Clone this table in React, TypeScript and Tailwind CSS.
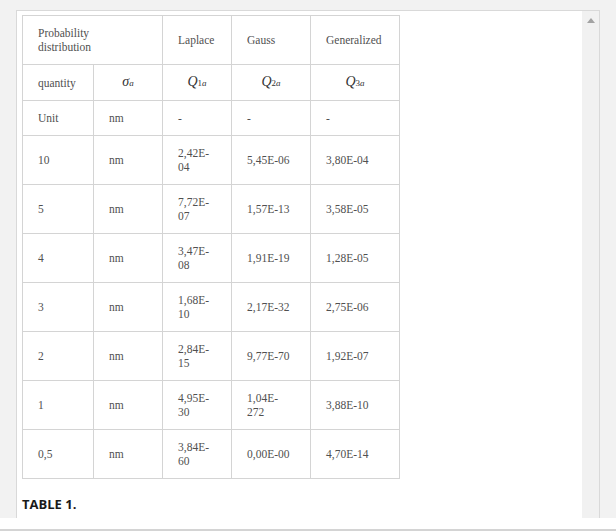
import React from "react";

const rows: [string, string, string, string, string][] = [
  ["10", "nm", "2,42E-04", "5,45E-06", "3,80E-04"],
  ["5", "nm", "7,72E-07", "1,57E-13", "3,58E-05"],
  ["4", "nm", "3,47E-08", "1,91E-19", "1,28E-05"],
  ["3", "nm", "1,68E-10", "2,17E-32", "2,75E-06"],
  ["2", "nm", "2,84E-15", "9,77E-70", "1,92E-07"],
  ["1", "nm", "4,95E-30", "1,04E-272", "3,88E-10"],
  ["0,5", "nm", "3,84E-60", "0,00E-00", "4,70E-14"],
];

const td = "border border-[#d4d4d4] px-[15px] py-[10px] align-middle";

function Q({ n }: { n: string }) {
  return (
    <span className="italic text-[14px] text-[#333]" style={{ fontFamily: '"Liberation Serif", serif' }}>
      Q<span className="text-[9px] not-italic">{n}</span><span className="text-[9px]">a</span>
    </span>
  );
}

export default function App() {
  return (
    <div className="w-[616px] h-[531px] bg-[#f2f2f2] flex flex-col overflow-hidden">
      <div className="flex h-[518px] pt-[10px]">
        <div className="w-[16px] shrink-0" />
        <div className="w-[584px] shrink-0 flex border border-[#d9d9d9] bg-white border-b-0">
          <div className="flex-1 pl-[5px] pt-[4px] flex flex-col">
            <table
              className="border-collapse table-fixed w-[377px] text-[11.5px] leading-[14px] text-[#505050]"
              style={{ fontFamily: '"Liberation Serif", "Times New Roman", serif' }}
            >
              <colgroup>
                <col className="w-[71px]" />
                <col className="w-[69px]" />
                <col className="w-[69px]" />
                <col className="w-[79px]" />
                <col className="w-[89px]" />
              </colgroup>
              <tbody>
                <tr className="h-[49px]">
                  <td className={td} colSpan={2}>Probability<br />distribution</td>
                  <td className={td}>Laplace</td>
                  <td className={td}>Gauss</td>
                  <td className={td}>Generalized</td>
                </tr>
                <tr className="h-[36px]">
                  <td className={td}>quantity</td>
                  <td className={td + " text-center"}>
                    <span className="italic text-[14px] text-[#333]">σ</span>
                    <span className="italic text-[9px] text-[#333]">a</span>
                  </td>
                  <td className={td + " text-center"}><Q n="1" /></td>
                  <td className={td + " text-center"}><Q n="2" /></td>
                  <td className={td + " text-center"}><Q n="3" /></td>
                </tr>
                <tr className="h-[35px]">
                  <td className={td}>Unit</td>
                  <td className={td}>nm</td>
                  <td className={td}>-</td>
                  <td className={td}>-</td>
                  <td className={td}>-</td>
                </tr>
                {rows.map((r) => (
                  <tr key={r[0]} className="h-[49px]">
                    {r.map((c, i) => (
                      <td key={i} className={td + " break-words"}>{c}</td>
                    ))}
                  </tr>
                ))}
              </tbody>
            </table>
            <div
              className="mt-[16px] text-[13px] font-bold text-[#1a1a1a]"
              style={{ fontFamily: '"Open Sans", sans-serif' }}
            >
              TABLE 1.
            </div>
          </div>
          <div className="w-[17px] shrink-0 bg-[#f1f1f1] flex justify-center pt-[7px]">
            <svg width="8" height="5" viewBox="0 0 8 5">
              <path d="M0 5 L4 0 L8 5 Z" fill="#a3a3a3" />
            </svg>
          </div>
        </div>
        <div className="flex-1" />
      </div>
      <div className="h-[11px] bg-white" />
      <div className="h-[2px] bg-[#d4d4d4]" />
    </div>
  );
}
